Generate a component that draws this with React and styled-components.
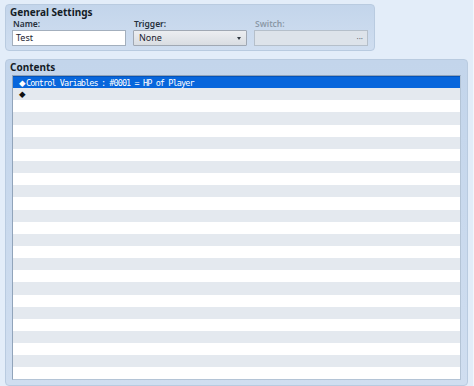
import React from "react";
import styled, { createGlobalStyle } from "styled-components";

const Global = createGlobalStyle`
  html, body {
    margin: 0;
    padding: 0;
    background: #e3edf9;
  }
  body {
    font-family: "Noto Sans", "DejaVu Sans", sans-serif;
    color: #1c2430;
  }
`;

const Window = styled.div`
  width: 474px;
  height: 386px;
  box-sizing: border-box;
  padding: 4px 7px 2px 5px;
  display: flex;
  flex-direction: column;
  gap: 8px;
  border-right: 1px solid #f2f7fd;
`;

const Panel = styled.section`
  box-sizing: border-box;
  width: ${(p) => p.width};
  height: ${(p) => p.height};
  padding: 1px 6px 5px 6px;
  border-radius: 4px;
  background: linear-gradient(#c3d5eb, #d0def0);
  border: 1px solid #b9cbe0;
  display: flex;
  flex-direction: column;
`;

const PanelTitle = styled.div`
  font-weight: 700;
  font-size: 10px;
  line-height: 12px;
  margin-left: -2px;
  color: #141c26;
`;

const FieldRow = styled.div`
  display: flex;
  gap: 7px;
`;

const Field = styled.div`
  width: 115px;
  display: flex;
  flex-direction: column;
  gap: 1px;
`;

const Label = styled.label`
  font-size: 8.5px;
  font-weight: 600;
  line-height: 11px;
  padding-left: 1px;
  color: ${(p) => (p.disabled ? "#8c99a8" : "#26303c")};
`;

const TextBox = styled.div`
  box-sizing: border-box;
  height: 16px;
  border: 1px solid #a3afbd;
  background: #fff;
  font-size: 9px;
  line-height: 14px;
  padding-left: 3px;
  color: #1c2430;
`;

const Select = styled.div`
  box-sizing: border-box;
  height: 16px;
  border: 1px solid #a0a8b3;
  border-radius: 1px;
  background: linear-gradient(#eceef1, #d9dde2);
  font-size: 9px;
  line-height: 14px;
  padding: 0 5px 0 5px;
  display: flex;
  justify-content: space-between;
  align-items: center;
  color: #1c2430;
`;

const Caret = styled.span`
  width: 0;
  height: 0;
  border-left: 2.5px solid transparent;
  border-right: 2.5px solid transparent;
  border-top: 3px solid #303840;
`;

const Picker = styled.div`
  box-sizing: border-box;
  height: 16px;
  border: 1px solid #b5bfca;
  background: #dde3ea;
  display: flex;
  justify-content: flex-end;
  align-items: center;
  padding-right: 4px;
  font-size: 8px;
  color: #66707c;
`;

const List = styled.div`
  flex: 1;
  margin-top: 2px;
  border: 1px solid #91a4ba;
  border-right-color: #b4c4d6;
  border-bottom-color: #b4c4d6;
  background: #fff;
  overflow: hidden;
  display: flex;
  flex-direction: column;
`;

const Row = styled.div`
  box-sizing: border-box;
  flex: 0 0 12.15px;
  height: 12.15px;
  padding-left: 6px;
  display: flex;
  align-items: center;
  font-family: "DejaVu Sans Mono", monospace;
  font-size: 8.5px;
  letter-spacing: -0.9px;
  white-space: pre;
  color: ${(p) => (p.selected ? "#fff" : "#101010")};
  background: ${(p) =>
    p.selected ? "#0766dc" : p.striped ? "#e4e9ef" : "#ffffff"};
  border-top: ${(p) => (p.selected ? "1px solid #0453b8" : "none")};
`;

const Diamond = styled.span`
  font-family: "DejaVu Sans", sans-serif;
  font-size: 8.5px;
  letter-spacing: 0;
  margin-right: 0.5px;
`;

const Colon = styled.span`
  display: inline-block;
  width: 11.5px;
  text-align: center;
  letter-spacing: 0;
`;

const rowCount = 25;

export default function App() {
  const rows = Array.from({ length: rowCount }, (_, i) => i);
  return (
    <>
      <Global />
      <Window>
        <Panel width="370px" height="47px">
          <PanelTitle>General Settings</PanelTitle>
          <FieldRow>
            <Field>
              <Label>Name:</Label>
              <TextBox>Test</TextBox>
            </Field>
            <Field>
              <Label>Trigger:</Label>
              <Select>
                None
                <Caret />
              </Select>
            </Field>
            <Field>
              <Label disabled>Switch:</Label>
              <Picker>···</Picker>
            </Field>
          </FieldRow>
        </Panel>
        <Panel width="463px" height="327px">
          <PanelTitle>Contents</PanelTitle>
          <List>
            {rows.map((i) => {
              if (i === 0)
                return (
                  <Row key={i} selected>
                    <Diamond>◆</Diamond>Control Variables<Colon>:</Colon>#0001 = HP of Player
                  </Row>
                );
              if (i === 1)
                return (
                  <Row key={i} striped>
                    <Diamond>◆</Diamond>
                  </Row>
                );
              return <Row key={i} striped={i % 2 === 1} />;
            })}
          </List>
        </Panel>
      </Window>
    </>
  );
}
